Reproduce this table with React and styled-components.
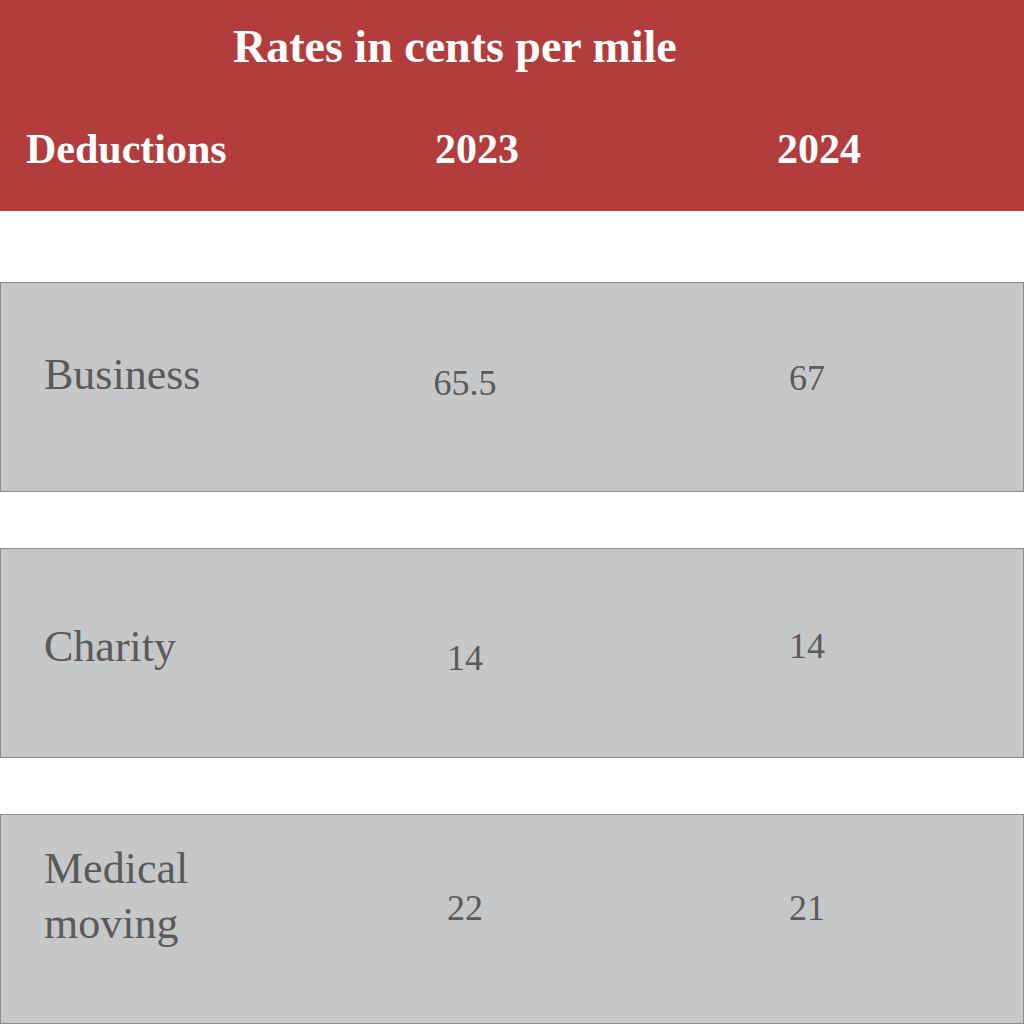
import React from 'react';
import styled, {createGlobalStyle} from 'styled-components';

const GlobalStyle = createGlobalStyle`
    html, body {
        margin: 0;
        padding: 0;
        background: #ffffff;
    }
    body {
        font-family: "Liberation Serif", "Times New Roman", serif;
    }
`;

const Page = styled.div`
    width: 1024px;
    height: 1024px;
    background: #ffffff;
    overflow: hidden;
`;

const Header = styled.header`
    height: 211px;
    box-sizing: border-box;
    background: #b33d3d;
    color: #ffffff;
    padding-top: 18px;
`;

const Title = styled.h1`
    margin: 0;
    padding-left: 233px;
    font-size: 46px;
    font-weight: bold;
    line-height: 1.25;
`;

const HeadRow = styled.div`
    display: grid;
    grid-template-columns: 351px 200px 142px 200px;
    padding-left: 26px;
    margin-top: 47px;
    font-size: 42px;
    font-weight: bold;
    line-height: 1.25;
`;

const HeadCell = styled.div`
    text-align: ${p => (p.$center ? 'center' : 'left')};
    grid-column: ${p => p.$col};
`;

const Rows = styled.div`
    display: flex;
    flex-direction: column;
    gap: 56px;
    padding-top: 71px;
`;

const Row = styled.div`
    display: grid;
    grid-template-columns: 321px 200px 142px 200px;
    align-items: start;
    height: 210px;
    box-sizing: border-box;
    padding-left: 43px;
    background: #c6c7c9;
    border: 1px solid #8e8e8e;
    color: #5a5a5a;
`;

const Label = styled.div`
    padding-top: ${p => p.$top}px;
    font-size: 44px;
    line-height: 1.25;
`;

const Value = styled.div`
    grid-column: ${p => p.$col};
    padding-top: ${p => p.$top}px;
    font-size: 36px;
    line-height: 1.25;
    text-align: center;
`;

const data = [
    {label: ['Business'], top: 64, a: '65.5', aTop: 78, b: '67', bTop: 73},
    {label: ['Charity'], top: 70, a: '14', aTop: 87, b: '14', bTop: 75},
    {label: ['Medical', 'moving'], top: 26, a: '22', aTop: 71, b: '21', bTop: 71},
];

export default function App() {
    return (
        <Page>
            <GlobalStyle />
            <Header>
                <Title>Rates in cents per mile</Title>
                <HeadRow>
                    <HeadCell $col={1}>Deductions</HeadCell>
                    <HeadCell $col={2} $center>2023</HeadCell>
                    <HeadCell $col={4} $center>2024</HeadCell>
                </HeadRow>
            </Header>
            <Rows>
                {data.map(row => (
                    <Row key={row.label[0]}>
                        <Label $top={row.top}>
                            {row.label.map(line => <div key={line}>{line}</div>)}
                        </Label>
                        <Value $col={2} $top={row.aTop}>{row.a}</Value>
                        <Value $col={4} $top={row.bTop}>{row.b}</Value>
                    </Row>
                ))}
            </Rows>
        </Page>
    );
}
